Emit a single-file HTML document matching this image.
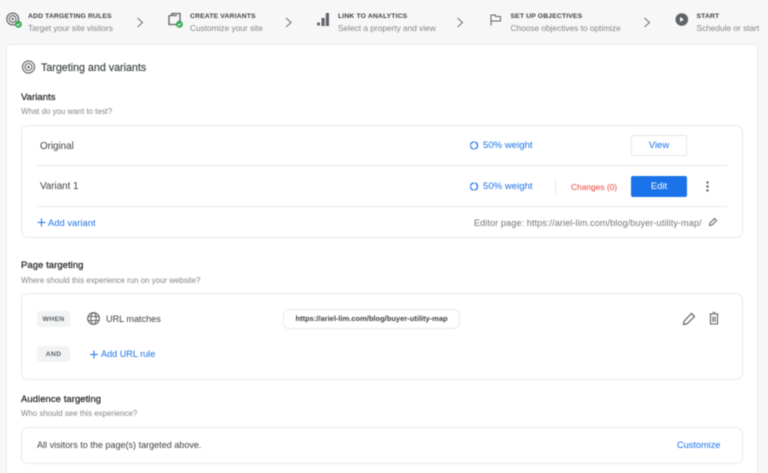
<!DOCTYPE html>
<html><head><meta charset="utf-8"><style>
html,body{margin:0;padding:0;width:768px;height:473px;overflow:hidden;background:#f7f7f7}
#w{position:absolute;left:0;top:0;width:768px;height:473px;overflow:hidden;background:#f7f7f7;font-family:"Liberation Sans",sans-serif;color:#3c4043;filter:blur(.4px)}
.t{position:absolute;white-space:nowrap;line-height:14px;z-index:3}
.h{font-size:6.800px;font-weight:700;letter-spacing:.14px;color:#3c4043;top:9.500px}
.s{font-size:8.300px;color:#80868b;top:21px}
.b{color:#1a73e8}
.box{position:absolute;background:#fff;border:1px solid #eaebec;border-radius:7px;box-sizing:border-box}
.ln{position:absolute;height:1px;background:#eaebec;z-index:1}
.sec{font-size:9.500px;color:#202124;letter-spacing:.05px;-webkit-text-stroke:.2px #202124}
.sub{font-size:7.900px;color:#80868b}
.tag{position:absolute;left:37px;width:33px;height:16px;background:#f1f3f4;border-radius:3px;font-size:6.800px;font-weight:700;color:#5f6368;letter-spacing:.3px;text-align:center;line-height:17px;z-index:3}
svg{position:absolute;left:0;top:0;overflow:visible;z-index:2}
</style></head><body><div id="w">
<div class="box" style="left:6px;top:44px;width:752px;height:440px;border-radius:4px"></div>
<div class="box" style="left:21px;top:125px;width:722px;height:113px"></div>
<div class="box" style="left:21px;top:293px;width:722px;height:87px"></div>
<div class="box" style="left:21px;top:427px;width:722px;height:37px"></div>
<div class="ln" style="left:37px;top:165px;width:690px"></div>
<div class="ln" style="left:37px;top:206px;width:690px"></div>

<svg width="768" height="473" fill="none">
<g stroke="#5f6368">
<circle cx="12.700" cy="19" r="5.900" stroke-width="1.200"/><circle cx="12.700" cy="19" r="3.400" stroke-width="1.100"/><circle cx="12.700" cy="19" r="1.200" fill="#5f6368" stroke="none"/>
<path d="M172 16v-2.500h8v8" stroke-width="1.300"/><path d="M169 15.500h8M169 15.500v9h7" stroke-width="1.300"/>
<path d="M491 25.500V15h4.500v1.500h5v4.500h-9.500" stroke-width="1"/>
<path d="M137.500 18l5 4.500-5 4.500M286 18l5 4.500-5 4.500M457.500 18l5 4.500-5 4.500M644.500 18l5 4.500-5 4.500" stroke-width="1.100" stroke="#70757a"/>
</g>
<circle cx="18.400" cy="24.300" r="3.500" fill="#34a853"/><path d="M16.700 24.300l1.200 1.200 2.200-2.200" stroke="#fff" stroke-width=".9"/>
<circle cx="179.400" cy="24.300" r="3.500" fill="#34a853"/><path d="M177.700 24.300l1.200 1.200 2.200-2.200" stroke="#fff" stroke-width=".9"/>
<g fill="#5f6368"><circle cx="318.500" cy="24" r="1.600"/><rect x="321.500" y="18" width="3.200" height="8"/><rect x="325.800" y="13" width="3.200" height="13"/></g>
<circle cx="681.800" cy="19.500" r="6.300" fill="#5f6368"/><path d="M680 17l3.800 2.500-3.800 2.500z" fill="#fff"/>
<g stroke="#5f6368"><circle cx="28.500" cy="67" r="6" stroke-width="1.200"/><circle cx="28.500" cy="67" r="3.500" stroke-width="1.100"/><circle cx="28.500" cy="67" r="1.300" fill="#5f6368" stroke="none"/></g>
<g stroke="#1a73e8" stroke-width="1.300"><circle cx="474" cy="145.500" r="3.500" stroke-dasharray="5 .8"/><circle cx="474" cy="186.500" r="3.500" stroke-dasharray="5 .8"/><path d="M37.500 222.500h8M41.500 218.500v8M90 354.500h8M94 350.500v8" stroke-width="1"/></g>
<g fill="#5f6368"><circle cx="707.500" cy="182.500" r="1.200"/><circle cx="707.500" cy="186.500" r="1.200"/><circle cx="707.500" cy="190.500" r="1.200"/></g>
<g stroke="#5f6368"><path d="M709.500 225.500l.5-2.500 4.500-4.500 2 2-4.500 4.500z" stroke-width="1"/>
<path d="M683.500 324.500l.7-3.500 7.300-7.500 3 3-7.500 7.300z" stroke-width="1.200"/>
<path d="M709.500 314h9M710.500 314v10h7v-10M712.500 312.500h3M713 316.500v5.500M715 316.500v5.500" stroke-width="1.100"/>
<circle cx="93.500" cy="318.500" r="5.800" stroke-width="1.100"/><ellipse cx="93.500" cy="318.500" rx="2.600" ry="5.800" stroke-width="1"/><path d="M88 316.500h11M88 320.500h11" stroke-width="1"/></g>
</svg>

<div class="t h" style="left:28px">ADD TARGETING RULES</div><div class="t s" style="left:28px">Target your site visitors</div>
<div class="t h" style="left:190px">CREATE VARIANTS</div><div class="t s" style="left:190px">Customize your site</div>
<div class="t h" style="left:338px">LINK TO ANALYTICS</div><div class="t s" style="left:338px">Select a property and view</div>
<div class="t h" style="left:510.500px">SET UP OBJECTIVES</div><div class="t s" style="left:510.500px">Choose objectives to optimize</div>
<div class="t h" style="left:696.500px">START</div><div class="t s" style="left:696.500px">Schedule or start</div>

<div class="t" style="left:41px;top:61px;font-size:10.700px;color:#3c4043;-webkit-text-stroke:.15px #3c4043">Targeting and variants</div>

<div class="t sec" style="left:21px;top:91px">Variants</div>
<div class="t sub" style="left:21px;top:105px">What do you want to test?</div>
<div class="t" style="left:40px;top:139.500px;font-size:9.800px">Original</div>
<div class="t" style="left:40px;top:180px;font-size:9.800px">Variant 1</div>
<div class="t b" style="left:483px;top:139px;font-size:9.500px;letter-spacing:.05px">50% weight</div>
<div class="t b" style="left:483px;top:180px;font-size:9.500px;letter-spacing:.05px">50% weight</div>
<div class="ln" style="left:555px;top:178px;width:1px;height:16px"></div>
<div class="t" style="left:571px;top:180px;font-size:8.400px;color:#ea4335">Changes (0)</div>
<div class="t" style="left:631px;top:135px;width:56px;height:21px;box-sizing:border-box;border:1px solid #e4e6e8;border-radius:2px;background:#fff;color:#1a73e8;font-size:9.500px;text-align:center;line-height:19px">View</div>
<div class="t" style="left:631px;top:176px;width:56px;height:21px;border-radius:2px;background:#1a73e8;color:#fff;font-size:9.500px;text-align:center;line-height:21px">Edit</div>
<div class="t b" style="left:48px;top:215.500px;font-size:9.300px;letter-spacing:.05px">Add variant</div>
<div class="t" style="left:474px;top:215.500px;font-size:9px;color:#70757a;letter-spacing:.13px">Editor page: https://ariel-lim.com/blog/buyer-utility-map/</div>

<div class="t sec" style="left:21px;top:259px">Page targeting</div>
<div class="t sub" style="left:21px;top:273.500px">Where should this experience run on your website?</div>
<div class="tag" style="top:311px">WHEN</div><div class="tag" style="top:346px">AND</div>
<div class="t" style="left:106px;top:312px;font-size:9.100px">URL matches</div>
<div class="t b" style="left:101px;top:347px;font-size:9.100px">Add URL rule</div>
<div class="t" style="left:283px;top:309px;width:177px;height:20px;box-sizing:border-box;border:1px solid #e8eaed;border-radius:6px;background:#fff;font-size:7.500px;font-weight:700;color:#3c4043;line-height:18px;padding-left:11.500px">https://ariel-lim.com/blog/buyer-utility-map</div>

<div class="t sec" style="left:21px;top:393px">Audience targeting</div>
<div class="t sub" style="left:21px;top:407px">Who should see this experience?</div>
<div class="t" style="left:37px;top:438px;font-size:9.050px">All visitors to the page(s) targeted above.</div>
<div class="t b" style="left:677px;top:438px;font-size:9.200px">Customize</div>
</div></body></html>
